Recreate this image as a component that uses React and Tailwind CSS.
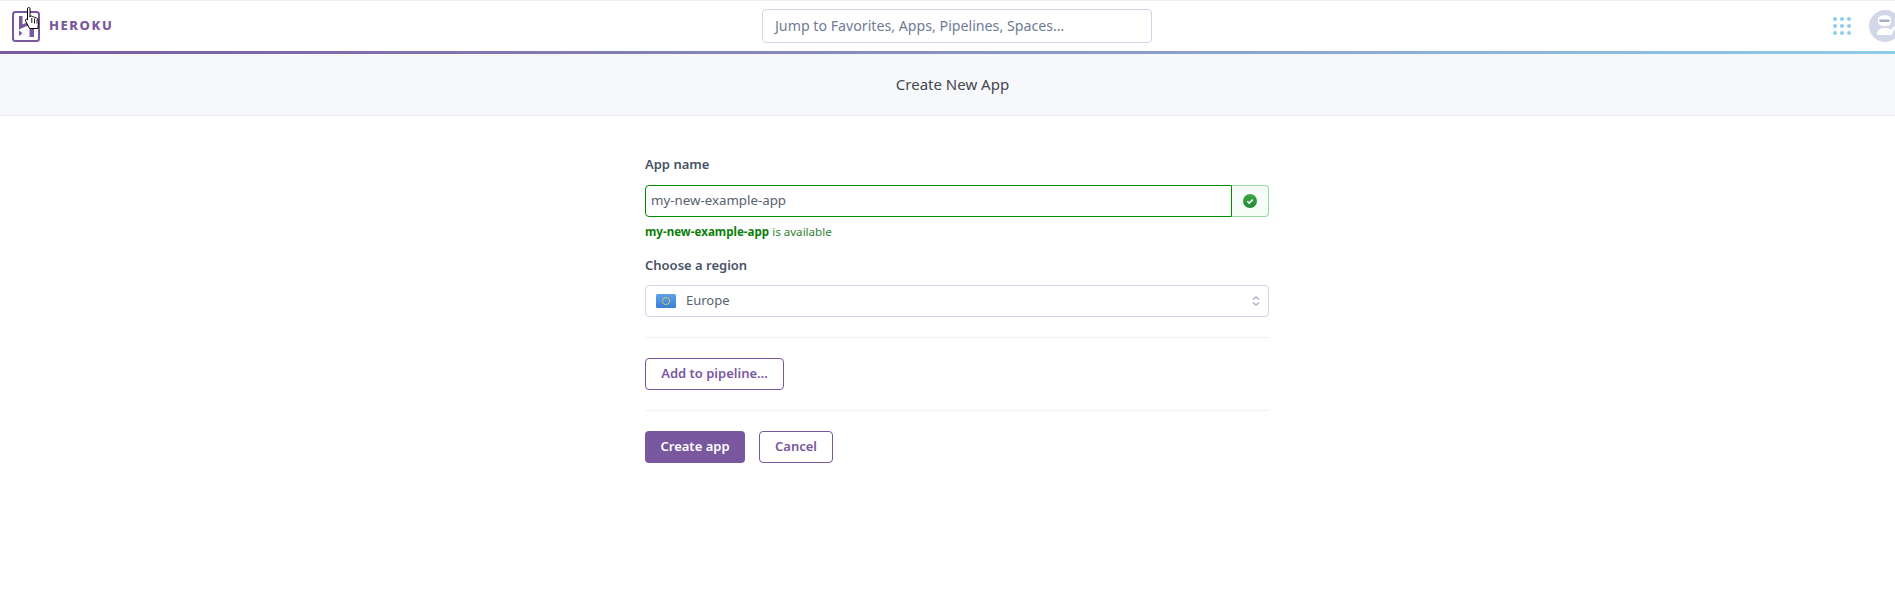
const FONT = "font-['Noto_Sans','Open_Sans',sans-serif]";

function Logo() {
  return (
    <svg width="28" height="31" viewBox="0 0 28 31" className="shrink-0">
      <rect x="1" y="1" width="26" height="29" rx="2.500" fill="#fff" stroke="#79589f" strokeWidth="2" />
      <path d="M7 5h3.500v8.500c3-1.500 5.500-2.500 7.500-2.500 3 0 4 2 4 4.500V26h-4.500v-9.500c0-1-.5-1.500-1.500-1.500-2 0-5.500 2-9 3.500z" fill="#79589f" />
      <path d="M7 19.500v5.500l3.500-2.800z" fill="#79589f" />
    </svg>
  );
}

function HandCursor() {
  return (
    <svg width="16" height="24" viewBox="0 0 16 24" className="absolute left-[25px] top-[7px]">
      <path
        d="M2.500 1.500c0-1.200 2.500-1.200 2.500 0v8.500l.6-.8c.5-.3 1.600-.3 1.900.4l.3.400c.6-.4 1.700-.3 2 .5l.2.300c.6-.3 1.700-.2 2 .6l.8.700c.9 1 .8 5.400-.1 9.400H4.500L.8 14.500c-1.200-1.800.4-3 1.700-1.700z"
        fill="#fff"
        stroke="#000"
        strokeWidth="1"
      />
      <path d="M6.800 11v5M9.500 11.500v5M12 12.500v4" stroke="#000" strokeWidth="0.900" />
    </svg>
  );
}

function Avatar() {
  return (
    <div className="w-[32px] h-[32px] rounded-full bg-[#d2d8e8] overflow-hidden shrink-0 -mr-[6px]">
      <svg width="32" height="32" viewBox="0 0 32 32">
        <path d="M9 9c0-5 13-5 13 0v4c-1 4-12 4-13 0z" fill="#fff" />
        <path d="M10.500 9.500h10v2.500h-10z" fill="#a8b0c6" />
        <path d="M8 25c0-5 3-7 8-7 3 0 5 .5 6 2l3-4 1.500 1-3.500 7v1H8z" fill="#fff" />
      </svg>
    </div>
  );
}

function Dots() {
  return (
    <div className="grid grid-cols-3 gap-[3px]">
      {Array.from({ length: 9 }).map((_, i) => (
        <span key={i} className="w-[4px] h-[4px] rounded-full bg-[#8dcdec]" />
      ))}
    </div>
  );
}

function EuFlag() {
  return (
    <svg width="20" height="14" viewBox="0 0 20 14" className="shrink-0">
      <defs>
        <linearGradient id="flag" x1="0" y1="0" x2="0" y2="1">
          <stop offset="0" stopColor="#5ca3ec" />
          <stop offset="1" stopColor="#3b7fd2" />
        </linearGradient>
      </defs>
      <rect width="20" height="14" rx="1.500" fill="url(#flag)" />
      <circle cx="10" cy="7" r="3.500" fill="none" stroke="#f0d33c" strokeWidth="1.200" strokeDasharray="1.200 0.800" />
    </svg>
  );
}

function UpDown() {
  return (
    <svg width="8" height="10" viewBox="0 0 8 10" className="shrink-0">
      <path d="M1 3.500L4 .8l3 2.700M1 6.500l3 2.700 3-2.700" fill="none" stroke="#a3aec1" strokeWidth="1.200" />
    </svg>
  );
}

function CheckBadge() {
  return (
    <svg width="14" height="14" viewBox="0 0 14 14">
      <defs>
        <linearGradient id="ok" x1="0" y1="0" x2="0" y2="1">
          <stop offset="0" stopColor="#3fa648" />
          <stop offset="1" stopColor="#1f8a33" />
        </linearGradient>
      </defs>
      <circle cx="7" cy="7" r="7" fill="url(#ok)" />
      <path d="M4.300 7.300l1.900 1.800 3.500-3.500" fill="none" stroke="#fff" strokeWidth="1.500" />
    </svg>
  );
}

export default function App() {
  return (
    <div className={`relative min-h-[610px] bg-white ${FONT}`}>
      {/* top nav */}
      <header className="h-[51px] border-t border-[#eef1f6] flex items-center pl-3 overflow-hidden">
        <div className="flex items-center gap-[9px] w-[750px]">
          <Logo />
          <span className="text-[13px] font-extrabold tracking-[1.600px] text-[#79589f]">HEROKU</span>
        </div>
        <div className="w-[390px] h-[34px] rounded-[4px] border border-[#cfd7e6] flex items-center px-3 text-[14.200px] text-[#6f7c95]">
          Jump to Favorites, Apps, Pipelines, Spaces…
        </div>
        <div className="ml-auto flex items-center gap-[18px]">
          <Dots />
          <Avatar />
        </div>
      </header>
      <HandCursor />
      <div className="h-[3px] bg-gradient-to-r from-[#79589f] to-[#8dcdec]" />

      {/* page title */}
      <div className="h-[62px] pl-[10px] bg-[#f7f8fb] border-b border-[#e9edf4] flex items-center justify-center text-[15px] text-[#43464f]">
        Create New App
      </div>

      {/* form */}
      <main className="w-[624px] ml-[645px] pt-[39px]">
        <label className="block text-[13px] font-semibold leading-[18px] text-[#475366]">App name</label>
        <div className="flex mt-[12px] h-[32px]">
          <div className="flex-1 border border-[#008a00] rounded-l-[4px] flex items-center px-[5px] text-[13.300px] text-[#596270]">
            my-new-example-app
          </div>
          <div className="w-[37px] border border-l-0 border-[#96dc9f] rounded-r-[4px] bg-[#f6fcf7] flex items-center justify-center">
            <CheckBadge />
          </div>
        </div>
        <p className="mt-[7px] text-[11.600px] leading-[16px] text-[#2f8132]">
          <span className="font-bold text-[#0a7f0a]">my-new-example-app</span> is available
        </p>
        <label className="block mt-[16px] text-[13px] font-semibold leading-[18px] text-[#475366]">Choose a region</label>
        <div className="mt-[11px] h-[32px] border border-[#cfd7e6] rounded-[4px] flex items-center pl-[10px] pr-[8px] text-[13px] text-[#596270]">
          <EuFlag />
          <span className="ml-[10px] flex-1">Europe</span>
          <UpDown />
        </div>
        <hr className="mt-[20px] border-[#eef1f6]" />
        <button className="mt-[20px] h-[32px] w-[139px] border border-[#79589f] rounded-[4px] text-[13px] font-semibold text-[#79589f] bg-white">
          Add to pipeline…
        </button>
        <hr className="mt-[20px] border-[#eef1f6]" />
        <div className="mt-[20px] flex gap-[14px]">
          <button className="h-[32px] w-[100px] rounded-[4px] bg-[#79589f] text-[13px] font-semibold text-white">Create app</button>
          <button className="h-[32px] w-[74px] border border-[#79589f] rounded-[4px] text-[13px] font-semibold text-[#79589f] bg-white">Cancel</button>
        </div>
      </main>
    </div>
  );
}
